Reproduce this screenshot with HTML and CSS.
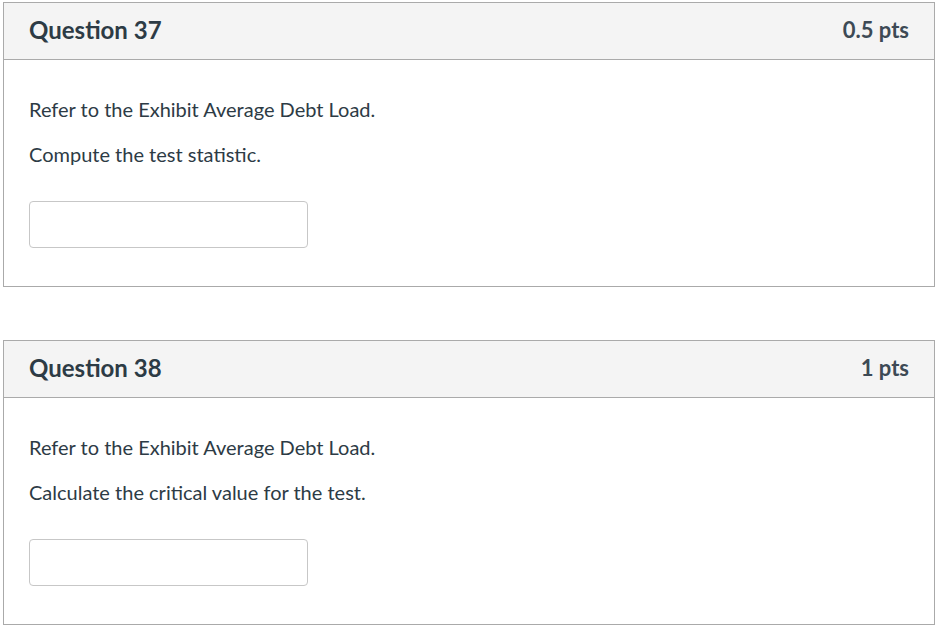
FILE: index.html
```html
<!DOCTYPE html>
<html>
<head>
<meta charset="utf-8">
<link rel="stylesheet" href="styles.css">
</head>
<body>
<div class="page">
  <div class="question">
    <div class="q-header">
      <span class="q-title">Question 37</span>
      <span class="q-pts">0.5 pts</span>
    </div>
    <div class="q-body">
      <p class="q-text">Refer to the Exhibit Average Debt Load.</p>
      <p class="q-text">Compute the test statistic.</p>
      <input class="q-input" type="text">
    </div>
  </div>
  <div class="question">
    <div class="q-header">
      <span class="q-title">Question 38</span>
      <span class="q-pts">1 pts</span>
    </div>
    <div class="q-body">
      <p class="q-text">Refer to the Exhibit Average Debt Load.</p>
      <p class="q-text">Calculate the critical value for the test.</p>
      <input class="q-input" type="text">
    </div>
  </div>
</div>
</body>
</html>
```
FILE: styles.css
```css
html, body {
  margin: 0;
  padding: 0;
  background: #fff;
}
body {
  font-family: Lato, "Open Sans", sans-serif;
  color: #2d3b45;
}
.page {
  padding: 2px 1px 0 3px;
  display: flex;
  flex-direction: column;
  gap: 53px;
}
.question {
  width: 930px;
  border: 1px solid #aaaaaa;
  background: #fff;
}
.q-header {
  height: 56px;
  background: #f4f4f4;
  border-bottom: 1px solid #aaaaaa;
  display: flex;
  align-items: center;
  justify-content: space-between;
  padding: 0 25px;
}
.q-title {
  font-size: 24px;
  font-weight: 700;
  line-height: 28px;
  margin-top: -3px;
}
.q-pts {
  font-size: 22px;
  font-weight: 700;
  line-height: 28px;
  margin-top: -3px;
  color: #3d4a55;
}
.q-body {
  box-sizing: border-box;
  height: 226px;
  padding: 37px 25px 0;
}
.q-text {
  margin: 0 0 21px;
  font-size: 20px;
  line-height: 24px;
}
.q-input {
  display: block;
  margin-top: 35px;
  width: 279px;
  height: 47px;
  box-sizing: border-box;
  border: 1px solid #c7c7c7;
  border-radius: 4px;
  background: #fff;
  padding: 0 8px;
  font-family: inherit;
  font-size: 16px;
}
```
